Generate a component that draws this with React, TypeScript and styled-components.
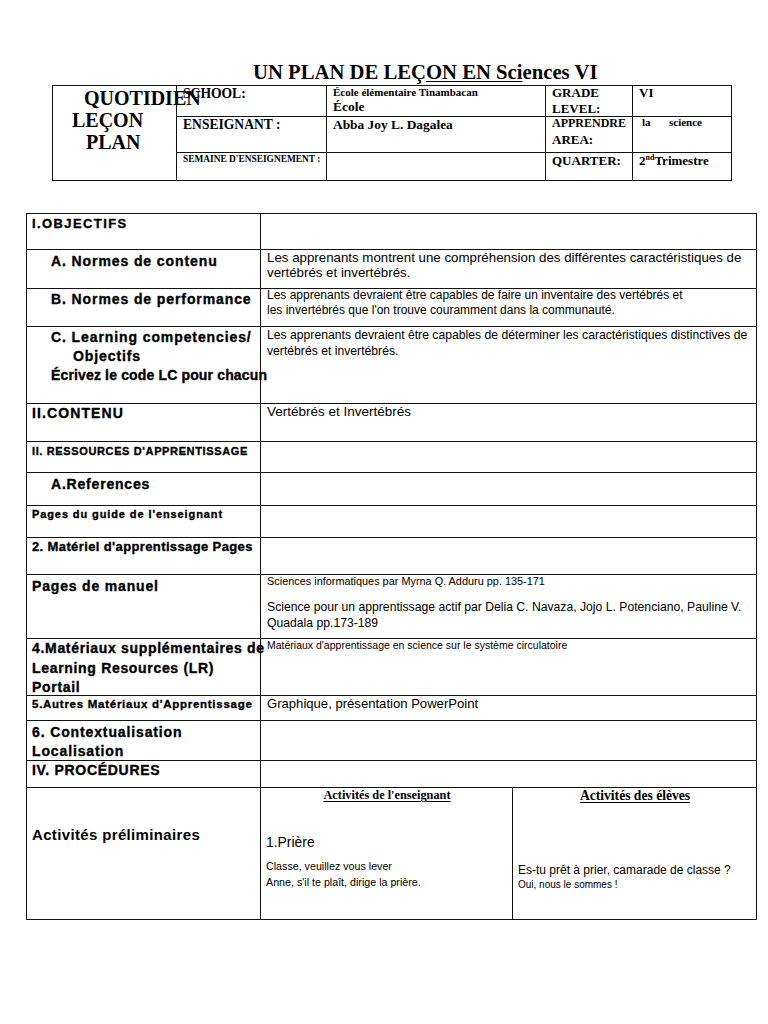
import React from "react";
import styled, { createGlobalStyle } from "styled-components";

const Global = createGlobalStyle`
  html, body { margin: 0; padding: 0; background: #fff; }
  body { width: 768px; min-height: 1024px; color: #000; }
`;

const Page = styled.div`
  width: 768px;
  min-height: 1024px;
  background: #fff;
  padding-top: 59px;
  box-sizing: border-box;
`;

const Title = styled.h1`
  margin: 0 0 0 253px;
  font-family: "Liberation Serif", serif;
  font-weight: bold;
  font-size: 20.7px;
  line-height: 26px;
  height: 26px;
  white-space: nowrap;
`;

const U = styled.span`
  text-decoration: underline;
  text-underline-offset: 2px;
  text-decoration-thickness: 1px;
`;

const HeaderGrid = styled.div`
  margin-left: 52px;
  width: 680px;
  height: 96px;
  box-sizing: border-box;
  border: 1px solid #111;
  display: grid;
  grid-template-columns: 124px 150px 219px 87px 1fr;
  grid-template-rows: 31px 36px 1fr;
  font-family: "Liberation Serif", serif;
  font-weight: bold;
`;

const HCell = styled.div<{ $last?: boolean; $bottom?: boolean; $size?: number; $pt?: number; $lh?: number }>`
  box-sizing: border-box;
  border-right: ${(p) => (p.$last ? "none" : "1px solid #111")};
  border-bottom: ${(p) => (p.$bottom ? "none" : "1px solid #111")};
  font-size: ${(p) => p.$size ?? 13}px;
  line-height: ${(p) => p.$lh ?? 16}px;
  padding: ${(p) => p.$pt ?? 0}px 4px 0 6px;
  white-space: nowrap;
  overflow: visible;
`;

const Lift = styled.div<{ $mt: number }>`
  margin-top: ${(p) => p.$mt}px;
`;

const BigCell = styled.div`
  grid-row: 1 / span 3;
  border-right: 1px solid #111;
  font-size: 20px;
  line-height: 22px;
  padding-top: 1px;
  position: relative;
  z-index: 1;
`;

const BigLine = styled.div<{ $indent: number }>`
  padding-left: ${(p) => p.$indent}px;
  white-space: nowrap;
`;

const SmallLine = styled.div<{ $size: number; $lh: number }>`
  font-size: ${(p) => p.$size}px;
  line-height: ${(p) => p.$lh}px;
`;

const Spread = styled.div`
  display: flex;
  justify-content: space-between;
  width: 60px;
  padding-left: 3px;
  font-size: 11px;
`;

const Table = styled.div`
  margin: 32px 0 0 26px;
  width: 731px;
  box-sizing: border-box;
  border: 1px solid #111;
  border-bottom: none;
`;

const Row = styled.div<{ $h: number }>`
  display: grid;
  grid-template-columns: 234px 1fr;
  height: ${(p) => p.$h}px;
  box-sizing: border-box;
  border-bottom: 1px solid #111;
`;

const Label = styled.div<{ $size?: number; $pt: number; $indent?: number; $lh?: number; $ls?: number }>`
  box-sizing: border-box;
  border-right: 1px solid #111;
  font-family: "Liberation Sans", Arial, sans-serif;
  font-weight: bold;
  font-size: ${(p) => p.$size ?? 14}px;
  line-height: ${(p) => p.$lh ?? 16}px;
  letter-spacing: ${(p) => p.$ls ?? 0.9}px;
  -webkit-text-stroke: 0.35px #000;
  padding: ${(p) => p.$pt}px 0 0 ${(p) => 5 + (p.$indent ?? 0)}px;
  white-space: nowrap;
  overflow: visible;
  position: relative;
  z-index: 1;
`;

const LabelLine = styled.div<{ $indent?: number; $ls?: number }>`
  padding-left: ${(p) => p.$indent ?? 0}px;
  ${(p) => (p.$ls !== undefined ? `letter-spacing: ${p.$ls}px;` : "")}
`;

const Content = styled.div<{ $size?: number; $mt?: number; $lh?: number }>`
  font-family: "Liberation Sans", Arial, sans-serif;
  font-size: ${(p) => p.$size ?? 12.5}px;
  line-height: ${(p) => p.$lh ?? 15}px;
  margin-top: ${(p) => p.$mt ?? 0}px;
  padding: 0 6px;
  white-space: nowrap;
`;

const Para = styled.div<{ $size: number; $lh: number; $mt?: number }>`
  font-size: ${(p) => p.$size}px;
  line-height: ${(p) => p.$lh}px;
  margin-top: ${(p) => p.$mt ?? 0}px;
`;

const ActRow = styled.div`
  display: grid;
  grid-template-columns: 234px 252px 1fr;
  height: 132px;
  box-sizing: border-box;
  border-bottom: 1px solid #111;
`;

const ActLabel = styled.div`
  border-right: 1px solid #111;
  font-family: "Liberation Sans", Arial, sans-serif;
  font-weight: bold;
  font-size: 15px;
  letter-spacing: 0.35px;
  padding: 38px 0 0 5px;
`;

const ActCol = styled.div<{ $last?: boolean }>`
  border-right: ${(p) => (p.$last ? "none" : "1px solid #111")};
  font-family: "Liberation Sans", Arial, sans-serif;
  padding: 0 4px 0 5px;
`;

const ActHead = styled.div<{ $size: number; $pt: number }>`
  font-family: "Liberation Serif", serif;
  font-weight: bold;
  font-size: ${(p) => p.$size}px;
  line-height: 14px;
  text-align: center;
  padding-top: ${(p) => p.$pt}px;
  text-decoration: underline;
  text-underline-offset: 2px;
`;

const ActText = styled.div<{ $size: number; $lh: number; $mt: number }>`
  font-size: ${(p) => p.$size}px;
  line-height: ${(p) => p.$lh}px;
  margin-top: ${(p) => p.$mt}px;
`;

export default function App() {
  return (
    <Page>
      <Global />
      <Title>
        UN PLAN DE LEÇ<U>ON EN Sci</U>ences VI
      </Title>
      <HeaderGrid>
        <BigCell>
          <BigLine $indent={31}>QUOTIDIEN</BigLine>
          <BigLine $indent={19}>LEÇON</BigLine>
          <BigLine $indent={33}>PLAN</BigLine>
        </BigCell>
        <HCell $size={13.6} $pt={0}>SCHOOL:</HCell>
        <HCell $pt={0}>
          <SmallLine $size={11} $lh={12}>École élémentaire Tinambacan</SmallLine>
          <SmallLine $size={13.5} $lh={18}>École</SmallLine>
        </HCell>
        <HCell $size={13} $lh={16}>
          <Lift $mt={-1}>
            GRADE
            <br />
            LEVEL:
          </Lift>
        </HCell>
        <HCell $last $size={13}>
          <Lift $mt={-1}>VI</Lift>
        </HCell>

        <HCell $size={13.6} $pt={0}>ENSEIGNANT :</HCell>
        <HCell $size={13.4} $pt={0}>Abba Joy L. Dagalea</HCell>
        <HCell>
          <Lift $mt={-1}>
            <SmallLine $size={12} $lh={15}>APPRENDRE</SmallLine>
            <SmallLine $size={13} $lh={18}>AREA:</SmallLine>
          </Lift>
        </HCell>
        <HCell $last>
          <Lift $mt={-3}>
            <Spread>
              <span>la</span>
              <span>science</span>
            </Spread>
          </Lift>
        </HCell>

        <HCell $bottom $size={9.4} $pt={0} $lh={12}>SEMAINE D'ENSEIGNEMENT :</HCell>
        <HCell $bottom />
        <HCell $bottom $size={13} $pt={0}>QUARTER:</HCell>
        <HCell $bottom $last $size={13} $pt={0}>
          2<sup style={{ fontSize: "8px", lineHeight: 0 }}>nd</sup>Trimestre
        </HCell>
      </HeaderGrid>

      <Table>
        <Row $h={36}>
          <Label $size={13} $ls={1.4} $pt={2}>I.OBJECTIFS</Label>
          <Content />
        </Row>
        <Row $h={39}>
          <Label $pt={3} $indent={19}>A. Normes de contenu</Label>
          <Content $size={13.3} $mt={0}>
            Les apprenants montrent une compréhension des différentes caractéristiques de
            <br />
            vertébrés et invertébrés.
          </Content>
        </Row>
        <Row $h={38}>
          <Label $pt={2} $indent={19}>B. Normes de performance</Label>
          <Content $size={12} $lh={15} $mt={-1}>
            Les apprenants devraient être capables de faire un inventaire des vertébrés et
            <br />
            les invertébrés que l'on trouve couramment dans la communauté.
          </Content>
        </Row>
        <Row $h={77}>
          <Label $pt={1} $indent={19} $lh={19}>
            <LabelLine>C. Learning competencies/</LabelLine>
            <LabelLine $indent={22}>Objectifs</LabelLine>
            <LabelLine $ls={0.15}>Écrivez le code LC pour chacun</LabelLine>
          </Label>
          <Content $size={12.2} $lh={16} $mt={0}>
            Les apprenants devraient être capables de déterminer les caractéristiques distinctives de
            <br />
            vertébrés et invertébrés.
          </Content>
        </Row>
        <Row $h={38}>
          <Label $pt={1} $ls={1.1}>II.CONTENU</Label>
          <Content $size={13.5} $mt={0}>Vertébrés et Invertébrés</Content>
        </Row>
        <Row $h={31}>
          <Label $size={11} $ls={0.63} $pt={1}>II. RESSOURCES D'APPRENTISSAGE</Label>
          <Content />
        </Row>
        <Row $h={33}>
          <Label $ls={0.8} $pt={3} $indent={19}>A.References</Label>
          <Content />
        </Row>
        <Row $h={32}>
          <Label $size={11} $ls={0.9} $pt={0}>Pages du guide de l'enseignant</Label>
          <Content />
        </Row>
        <Row $h={37}>
          <Label $size={13} $ls={0.38} $pt={1}>2. Matériel d'apprentissage Pages</Label>
          <Content />
        </Row>
        <Row $h={64}>
          <Label $ls={0.83} $pt={3}>Pages de manuel</Label>
          <Content $mt={0}>
            <Para $size={10.9} $lh={13}>Sciences informatiques par Myrna Q. Adduru pp. 135-171</Para>
            <Para $size={12.2} $lh={16} $mt={11}>
              Science pour un apprentissage actif par Delia C. Navaza, Jojo L. Potenciano, Pauline V.
              <br />
              Quadala pp.173-189
            </Para>
          </Content>
        </Row>
        <Row $h={57}>
          <Label $pt={0} $lh={19.5} $ls={0.68}>
            <LabelLine>4.Matériaux supplémentaires de</LabelLine>
            <LabelLine>Learning Resources (LR)</LabelLine>
            <LabelLine>Portail</LabelLine>
          </Label>
          <Content $mt={0}>
            <Para $size={10.5} $lh={12}>Matériaux d'apprentissage en science sur le système circulatoire</Para>
          </Content>
        </Row>
        <Row $h={25}>
          <Label $size={11.5} $ls={0.73} $pt={1} $lh={14}>5.Autres Matériaux d'Apprentissage</Label>
          <Content $size={13.1} $mt={0}>Graphique, présentation PowerPoint</Content>
        </Row>
        <Row $h={40}>
          <Label $pt={2} $lh={19} $ls={0.87}>
            <LabelLine>6. Contextualisation</LabelLine>
            <LabelLine>Localisation</LabelLine>
          </Label>
          <Content />
        </Row>
        <Row $h={27}>
          <Label $pt={1} $ls={0.7}>IV. PROCÉDURES</Label>
          <Content />
        </Row>
        <ActRow>
          <ActLabel>Activités préliminaires</ActLabel>
          <ActCol>
            <ActHead $size={12.3} $pt={0}>Activités de l'enseignant</ActHead>
            <ActText $size={13.9} $lh={16} $mt={32}>1.Prière</ActText>
            <ActText $size={10.7} $lh={16} $mt={8}>
              Classe, veuillez vous lever
              <br />
              Anne, s'il te plaît, dirige la prière.
            </ActText>
          </ActCol>
          <ActCol $last>
            <ActHead $size={13.6} $pt={1}>Activités des élèves</ActHead>
            <ActText $size={12} $lh={15} $mt={60}>Es-tu prêt à prier, camarade de classe ?</ActText>
            <ActText $size={10} $lh={14} $mt={0}>Oui, nous le sommes !</ActText>
          </ActCol>
        </ActRow>
      </Table>
    </Page>
  );
}
